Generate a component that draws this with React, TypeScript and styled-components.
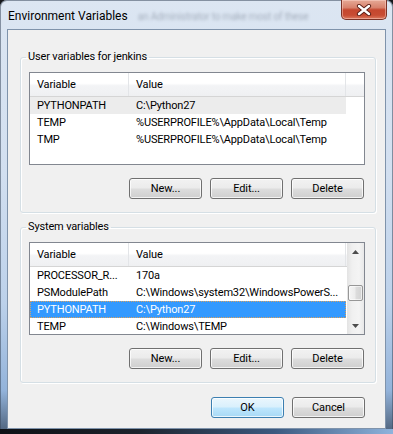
import React from "react";
import styled, { createGlobalStyle } from "styled-components";

const FONT = `Roboto, "Noto Sans", sans-serif`;

const GlobalStyle = createGlobalStyle`
  html, body { margin: 0; padding: 0; background: #15181c; }
  body { font-family: ${FONT}; }
  * { box-sizing: border-box; }
`;

const Window = styled.div`
  width: 393px;
  height: 434px;
  display: flex;
  flex-direction: column;
  border-radius: 7px 7px 0 0;
  overflow: hidden;
  font-family: ${FONT};
  font-size: 11px;
  letter-spacing: -0.15px;
  color: #000;
  background:
    linear-gradient(to bottom, #dce6f2 0%, #d2dff0 40%, #bcd1ea 70%, #93b3da 90%, #4b5f78 100%);
  box-shadow: inset 0 0 0 1px rgba(60, 75, 95, 0.55);
`;

const TitleBar = styled.div`
  height: 29px;
  display: flex;
  align-items: flex-start;
  padding: 0 6px 0 8px;
  gap: 10px;
`;

const Title = styled.div`
  margin-top: 8px;
  line-height: 16px;
  font-size: 12px;
  letter-spacing: 0;
  white-space: nowrap;
`;

const GhostText = styled.div`
  flex: 1;
  margin-top: 10px;
  line-height: 14px;
  font-size: 10px;
  white-space: nowrap;
  color: rgba(40, 50, 70, 0.3);
  filter: blur(1.4px);
`;

const CloseButton = styled.div`
  width: 46px;
  height: 20px;
  flex: none;
  display: flex;
  align-items: center;
  justify-content: center;
  border: 1px solid #7a3227;
  border-top: none;
  border-radius: 0 0 5px 5px;
  background: linear-gradient(to bottom, #e6a996 0%, #d8826d 40%, #c5472f 52%, #c84c33 80%, #dc7a60 100%);
  box-shadow: inset 0 0 0 1px rgba(255, 220, 210, 0.45);
`;

const Client = styled.div`
  flex: 1;
  margin: 0 7px;
  border: 1px solid #7f93ab;
  background: #f0f0f0;
  display: flex;
  flex-direction: column;
  padding: 20px 9px 10px 12px;
`;

const BottomEdge = styled.div`
  height: 5px;
  flex: none;
  background: linear-gradient(to right, #0e1116 0%, #1c232c 35%, #3c5a80 70%, #8fb3dc 100%);
`;

const Group = styled.fieldset<{ $gap?: number }>`
  margin: ${(p) => p.$gap ?? 0}px 0 0 0;
  padding: 8px 10px 13px 8px;
  border: 1px solid #d5dfe5;
  border-radius: 3px;
  box-shadow: inset 1px 1px 0 #fff, 1px 1px 0 #fff;
  min-width: 0;
`;

const Legend = styled.legend`
  margin-left: -3px;
  padding: 0 2px;
  line-height: 14px;
  font-size: 11px;
  color: #000;
`;

const List = styled.div`
  height: 93px;
  border: 1px solid #828790;
  background: #fff;
  display: flex;
  overflow: hidden;
`;

const ListBody = styled.div`
  flex: 1;
  min-width: 0;
  display: flex;
  flex-direction: column;
`;

const Header = styled.div`
  height: 24px;
  flex: none;
  display: flex;
  background: linear-gradient(to bottom, #ffffff 0%, #ffffff 45%, #f3f4f6 55%, #eff0f2 100%);
  border-bottom: 1px solid #d5d5d5;
`;

const HeaderCell = styled.div<{ $w?: number; $last?: boolean }>`
  width: ${(p) => (p.$w ? `${p.$w}px` : "auto")};
  flex: ${(p) => (p.$w ? "none" : "1")};
  padding-left: 7px;
  display: flex;
  align-items: center;
  border-right: ${(p) => (p.$last ? "none" : "1px solid #e3e5e8")};
  white-space: nowrap;
`;

const Row = styled.div<{ $state?: "none" | "inactive" | "active" }>`
  height: 17px;
  flex: none;
  display: flex;
  width: 316px;
  background: ${(p) =>
    p.$state === "active" ? "#3399ff" : p.$state === "inactive" ? "#ececec" : "transparent"};
  color: ${(p) => (p.$state === "active" ? "#fff" : "#000")};
  outline: ${(p) => (p.$state === "active" ? "1px dotted #d8a060" : "none")};
  outline-offset: -1px;
`;

const Cell = styled.div<{ $w: number }>`
  width: ${(p) => p.$w}px;
  flex: none;
  padding-left: 7px;
  line-height: 17px;
  white-space: nowrap;
  overflow: hidden;
`;

const ScrollBar = styled.div`
  width: 17px;
  flex: none;
  display: flex;
  flex-direction: column;
  background: linear-gradient(to right, #e3e3e3 0%, #f0f0f0 30%, #f4f4f4 70%, #e8e8e8 100%);
`;

const Arrow = styled.div`
  height: 17px;
  flex: none;
  display: flex;
  align-items: center;
  justify-content: center;
`;

const Track = styled.div`
  flex: 1;
  display: flex;
  flex-direction: column;
`;

const Thumb = styled.div<{ $offset: number }>`
  margin: ${(p) => p.$offset}px 1px 0 1px;
  height: 16px;
  border: 1px solid #979797;
  border-radius: 2px;
  background: linear-gradient(to right, #f5f5f5 0%, #ececec 45%, #dcdcdc 55%, #d2d2d2 100%);
  box-shadow: inset 0 0 0 1px rgba(255, 255, 255, 0.6);
`;

const ButtonRow = styled.div<{ $mt: number; $pr: number }>`
  display: flex;
  justify-content: flex-end;
  gap: 8px;
  margin-top: ${(p) => p.$mt}px;
  padding-right: ${(p) => p.$pr}px;
`;

const Button = styled.button<{ $default?: boolean }>`
  width: 73px;
  height: 21px;
  padding: 0;
  font-family: ${FONT};
  font-size: 11px;
  letter-spacing: -0.1px;
  color: #000;
  border: 1px solid ${(p) => (p.$default ? "#3c7fb1" : "#707070")};
  border-radius: 3px;
  background: ${(p) =>
    p.$default
      ? "linear-gradient(to bottom, #eaf6fd 0%, #d9f0fc 48%, #bee6fd 52%, #a7d9f5 100%)"
      : "linear-gradient(to bottom, #f2f2f2 0%, #ebebeb 48%, #dddddd 52%, #cfcfcf 100%)"};
  box-shadow: inset 0 0 0 1px rgba(255, 255, 255, 0.75);
`;

const COL1 = 99;
const COL2 = 217;

type Item = { name: string; value: string; state?: "none" | "inactive" | "active" };

const userVars: Item[] = [
  { name: "PYTHONPATH", value: "C:\\Python27", state: "inactive" },
  { name: "TEMP", value: "%USERPROFILE%\\AppData\\Local\\Temp" },
  { name: "TMP", value: "%USERPROFILE%\\AppData\\Local\\Temp" },
];

const sysVars: Item[] = [
  { name: "PROCESSOR_R...", value: "170a" },
  { name: "PSModulePath", value: "C:\\Windows\\system32\\WindowsPowerS..." },
  { name: "PYTHONPATH", value: "C:\\Python27", state: "active" },
  { name: "TEMP", value: "C:\\Windows\\TEMP" },
];

function VarList({ items, scroll }: { items: Item[]; scroll?: boolean }) {
  return (
    <List>
      <ListBody>
        <Header>
          <HeaderCell $w={COL1}>Variable</HeaderCell>
          <HeaderCell $w={COL2}>Value</HeaderCell>
          <HeaderCell $last />
        </Header>
        {items.map((it) => (
          <Row key={it.name + it.value} $state={it.state ?? "none"}>
            <Cell $w={COL1}>{it.name}</Cell>
            <Cell $w={COL2}>{it.value}</Cell>
          </Row>
        ))}
      </ListBody>
      {scroll && (
        <ScrollBar>
          <Arrow>
            <svg width="7" height="4" viewBox="0 0 7 4">
              <path d="M0 4 L3.5 0 L7 4 Z" fill="#4d4d4d" />
            </svg>
          </Arrow>
          <Track>
            <Thumb $offset={25} />
          </Track>
          <Arrow>
            <svg width="7" height="4" viewBox="0 0 7 4">
              <path d="M0 0 L3.5 4 L7 0 Z" fill="#4d4d4d" />
            </svg>
          </Arrow>
        </ScrollBar>
      )}
    </List>
  );
}

function ButtonsNED() {
  return (
    <ButtonRow $mt={13} $pr={1}>
      <Button>New...</Button>
      <Button>Edit...</Button>
      <Button>Delete</Button>
    </ButtonRow>
  );
}

export default function App() {
  return (
    <>
      <GlobalStyle />
      <Window>
        <TitleBar>
          <Title>Environment Variables</Title>
          <GhostText>an Administrator to make most of these</GhostText>
          <CloseButton>
            <svg width="16" height="12" viewBox="0 0 16 12">
              <path d="M3 2 L13 10 M13 2 L3 10" stroke="#5a1e16" strokeWidth="4.2" strokeLinecap="round" />
              <path d="M3 2 L13 10 M13 2 L3 10" stroke="#ffffff" strokeWidth="2.4" strokeLinecap="round" />
            </svg>
          </CloseButton>
        </TitleBar>
        <Client>
          <Group>
            <Legend>User variables for jenkins</Legend>
            <VarList items={userVars} />
            <ButtonsNED />
          </Group>
          <Group $gap={7}>
            <Legend>System variables</Legend>
            <VarList items={sysVars} scroll />
            <ButtonsNED />
          </Group>
          <ButtonRow $mt={14} $pr={11}>
            <Button $default>OK</Button>
            <Button>Cancel</Button>
          </ButtonRow>
        </Client>
        <BottomEdge />
      </Window>
    </>
  );
}
